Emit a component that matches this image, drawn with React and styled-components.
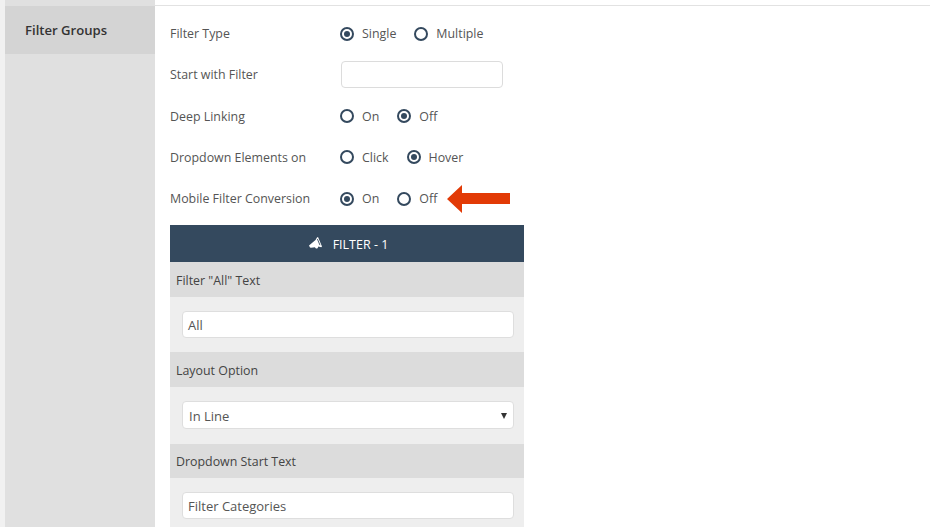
import React from "react"
import styled, { createGlobalStyle } from "styled-components"

const GlobalStyle = createGlobalStyle`
  html, body {
    margin: 0;
    padding: 0;
    background: #fff;
    overflow: hidden;
  }
  body {
    font-family: "Open Sans", "Liberation Sans", sans-serif;
  }
`

const Page = styled.div`
  display: flex;
  width: 930px;
  height: 527px;
  overflow: hidden;
  background: #fff;
`

const Gutter = styled.div`
  width: 5px;
  background: #f1f1f1;
`

const Sidebar = styled.aside`
  width: 150px;
  padding-top: 6px;
  background: #e0e0e0;
`

const SideItem = styled.div`
  height: 48px;
  padding: 14px 0 0 20px;
  box-sizing: border-box;
  background: #d4d4d4;
  color: #333;
  font-size: 13.1px;
  font-weight: 600;
  line-height: 20px;
`

const Main = styled.main`
  flex: 1;
  margin-top: 5px;
  padding: 7px 0 0 15px;
  border-top: 1px solid #e2e2e2;
`

const Row = styled.div`
  display: flex;
  align-items: center;
  height: 41.25px;
`

const Label = styled.div`
  width: 170px;
  color: #555;
  font-size: 12.4px;
`

const RadioOption = styled.div`
  display: flex;
  align-items: center;
  margin-right: 18px;
  color: #555;
  font-size: 12.4px;
`

const RadioMark = styled.span`
  position: relative;
  width: 14px;
  height: 14px;
  margin-right: 8px;
  box-sizing: border-box;
  border: 2px solid #34495e;
  border-radius: 50%;
  background: #fff;

  &::after {
    content: "";
    display: ${p => (p.$checked ? "block" : "none")};
    position: absolute;
    top: 2px;
    left: 2px;
    width: 6px;
    height: 6px;
    border-radius: 50%;
    background: #34495e;
  }
`

const ShortInput = styled.div`
  width: 162px;
  height: 27px;
  margin-left: 1px;
  box-sizing: border-box;
  border: 1px solid #dcdcdc;
  border-radius: 4px;
  background: #fff;
`

const ArrowSvg = styled.svg`
  display: block;
  width: 64px;
  height: 28px;
  margin-left: -8px;
`

const Panel = styled.section`
  width: 354px;
  margin-top: 6px;
  background: #eee;
`

const PanelHead = styled.div`
  display: flex;
  align-items: center;
  justify-content: center;
  height: 37px;
  padding: 1px 0 0 3px;
  box-sizing: border-box;
  background: #34495e;
  color: #fff;
  font-size: 12.5px;
  font-weight: 500;
`

const HeadIcon = styled.svg`
  width: 13px;
  height: 13px;
  margin: -1px 11px 0 0;
`

const SectionBar = styled.div`
  display: flex;
  align-items: center;
  height: ${p => p.$height}px;
  padding: ${p => p.$height - 34}px 0 0 6px;
  box-sizing: border-box;
  background: #dcdcdc;
  color: #444;
  font-size: 12.4px;
  font-weight: 500;
`

const SectionBody = styled.div`
  height: ${p => p.$height}px;
  padding: 14px 10px 0 12px;
  box-sizing: border-box;
  background: #eee;
`

const Field = styled.div`
  display: flex;
  align-items: center;
  justify-content: space-between;
  height: ${p => p.$height || 27}px;
  padding: ${p => (p.$select ? "1px 6px 0" : "0 5px")};
  box-sizing: border-box;
  border: 1px solid #dedede;
  border-radius: 4px;
  background: #fff;
  color: #555;
  font-size: 13px;
`

const Caret = styled.span`
  width: 0;
  height: 0;
  border-left: 3.5px solid transparent;
  border-right: 3.5px solid transparent;
  border-top: 6px solid #333;
`

const Radio = ({ label, checked }) => (
  <RadioOption>
    <RadioMark $checked={checked} />
    {label}
  </RadioOption>
)

const rows = [
  { label: "Filter Type", options: [["Single", true], ["Multiple", false]] },
  { label: "Start with Filter", input: true },
  { label: "Deep Linking", options: [["On", false], ["Off", true]] },
  { label: "Dropdown Elements on", options: [["Click", false], ["Hover", true]] },
  { label: "Mobile Filter Conversion", options: [["On", true], ["Off", false]], arrow: true },
]

const App = () => (
  <>
    <GlobalStyle />
    <Page>
      <Gutter />
      <Sidebar>
        <SideItem>Filter Groups</SideItem>
      </Sidebar>
      <Main>
        {rows.map(row => (
          <Row key={row.label}>
            <Label>{row.label}</Label>
            {row.input && <ShortInput />}
            {row.options &&
              row.options.map(([label, checked]) => (
                <Radio key={label} label={label} checked={checked} />
              ))}
            {row.arrow && (
              <ArrowSvg viewBox="0 0 64 28">
                <path d="M0 14 L15 0 L15 8 L63 8 L63 19 L15 19 L15 28 Z" fill="#e23a06" />
              </ArrowSvg>
            )}
          </Row>
        ))}
        <Panel>
          <PanelHead>
            <HeadIcon viewBox="0 0 13 13">
              <path
                d="M0 8.5 L6.5 3 L8 0.5 L9 0 L13 9.5 L12.2 10.3 L9.3 9.6 C9 11.8 7 12.5 6 10.2 L2 10.8 L1 10.6 Z"
                fill="#fff"
              />
              <path d="M8.4 2 L11 8.2" stroke="#34495e" strokeWidth="0.9" fill="none" />
            </HeadIcon>
            FILTER - 1
          </PanelHead>
          <SectionBar $height={35}>Filter "All" Text</SectionBar>
          <SectionBody $height={55}>
            <Field>All</Field>
          </SectionBody>
          <SectionBar $height={35}>Layout Option</SectionBar>
          <SectionBody $height={57}>
            <Field $select $height={28}>
              In Line
              <Caret />
            </Field>
          </SectionBody>
          <SectionBar $height={34}>Dropdown Start Text</SectionBar>
          <SectionBody $height={60}>
            <Field>Filter Categories</Field>
          </SectionBody>
        </Panel>
      </Main>
    </Page>
  </>
)

export default App
